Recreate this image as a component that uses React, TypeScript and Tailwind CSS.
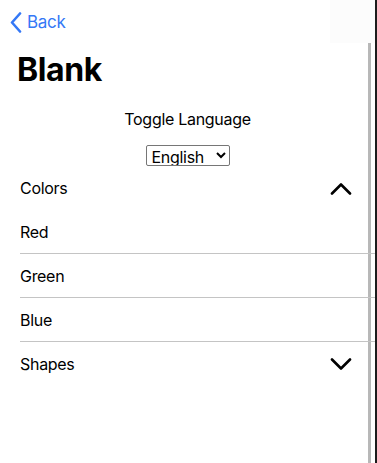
import React, { useState } from 'react';

const BackChevron = () => (
  <svg width="12" height="21" viewBox="0 0 12 21" fill="none" stroke="currentColor" strokeWidth="2.6" strokeLinecap="round" strokeLinejoin="round">
    <path d="M10 1.5L2 10.5l8 9" />
  </svg>
);

const Chevron = ({ up }: { up: boolean }) => (
  <svg width="22" height="13" viewBox="0 0 22 13" fill="none" stroke="currentColor" strokeWidth="2.6" strokeLinecap="round" strokeLinejoin="round">
    {up ? <path d="M2 11.5L11 2.5l9 9" /> : <path d="M2 1.5l9 9 9-9" />}
  </svg>
);

const sections = [
  { title: 'Colors', items: ['Red', 'Green', 'Blue'] },
  { title: 'Shapes', items: ['Circle', 'Square', 'Triangle'] },
];

export default function App() {
  const [open, setOpen] = useState<string | null>('Colors');
  const [lang, setLang] = useState('en');

  return (
    <div className="flex w-[377px] h-[463px] bg-white text-black tracking-[-0.3px]" style={{ fontFamily: 'Inter, "Noto Sans", sans-serif' }}>
      <div className="relative flex-1 flex flex-col">
        {/* top-right corner tint and scroll bar */}
        <div className="absolute top-0 right-0 w-[45px] h-[43px] bg-[#fcfcfc]" />
        <div className="absolute top-[43px] bottom-0 right-[4px] w-[3px] bg-[#b8b8b8]" />

        <div className="relative h-[44px] flex items-center pl-[10px] gap-[5px] text-[#3478f6]">
          <BackChevron />
          <span className="text-[17px] leading-none">Back</span>
        </div>

        <h1 className="relative mt-[6px] pl-[17px] text-[32px] leading-[40px] font-bold tracking-[-0.4px]">Blank</h1>

        <p className="relative mt-[17px] text-center text-[16px] leading-[24px]">Toggle Language</p>

        <div className="relative mt-[14px] flex justify-center">
          <select
            value={lang}
            onChange={(e) => setLang(e.target.value)}
            className="h-[21px] w-[84px] border border-[#767676] rounded-[2px] text-[16px] leading-[17px] py-0 px-[1px] bg-white"
          >
            <option value="en">English</option>
            <option value="fr">Français</option>
          </select>
        </div>

        <div className="relative">
          {sections.map((s) => {
            const isOpen = open === s.title;
            return (
              <div key={s.title}>
                <button
                  onClick={() => setOpen(isOpen ? null : s.title)}
                  className="w-full h-[44px] flex items-center justify-between pl-[20px] pr-[23px] text-[16px] text-left"
                >
                  <span>{s.title}</span>
                  <Chevron up={isOpen} />
                </button>
                {isOpen && (
                  <div className="pl-[20px]">
                    {s.items.map((item) => (
                      <div key={item} className="h-[44px] flex items-center text-[16px] border-b border-[#c4c4c4]">
                        {item}
                      </div>
                    ))}
                  </div>
                )}
              </div>
            );
          })}
        </div>
      </div>
      <div className="w-[2px] bg-[#1c1c1c]" />
    </div>
  );
}
